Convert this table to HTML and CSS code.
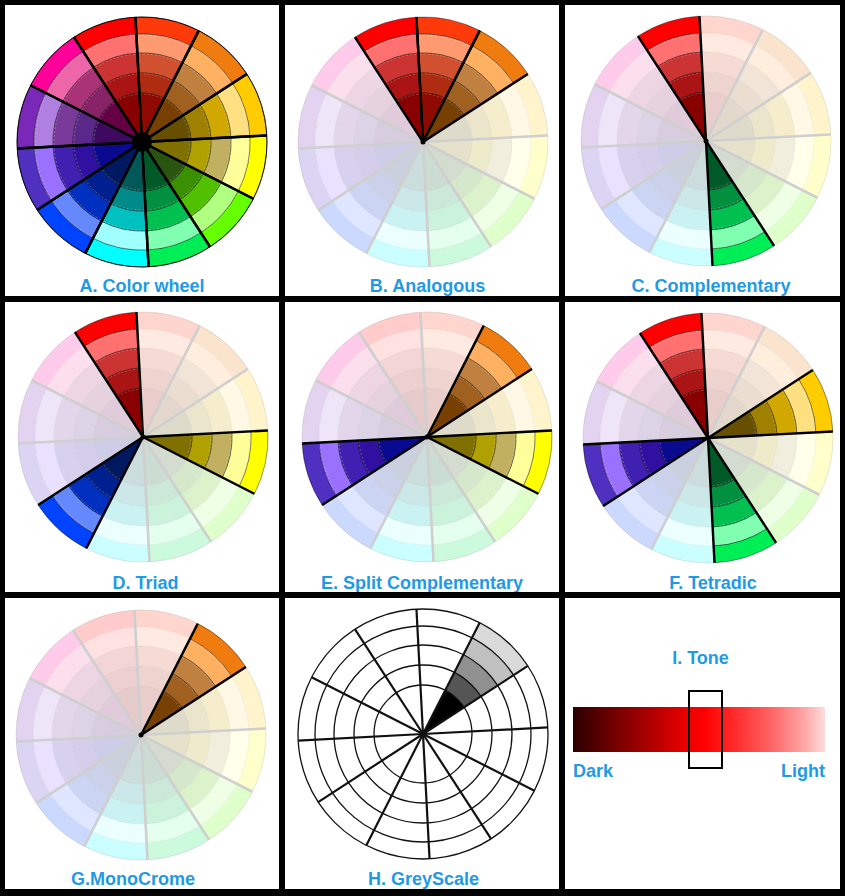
FILE: index.html
```html
<!DOCTYPE html>
<html lang="en">
<head>
<meta charset="utf-8">
<title>Color schemes</title>
<link rel="stylesheet" href="styles.css">
</head>
<body>
<div class="board">
  <div class="panel">
    <svg class="wheel" viewBox="0 0 274 271" data-mode="full" data-cx="137" data-cy="137"></svg>
    <div class="label">A. Color wheel</div>
  </div>
  <div class="panel">
    <svg class="wheel" viewBox="0 0 274 271" data-hl="0,1,2" data-cx="138" data-cy="137"></svg>
    <div class="label shift-b">B. Analogous</div>
  </div>
  <div class="panel">
    <svg class="wheel" viewBox="0 0 274 271" data-hl="0,6" data-cx="141" data-cy="136"></svg>
    <div class="label shift-c">C. Complementary</div>
  </div>
  <div class="panel">
    <svg class="wheel" viewBox="0 0 274 271" data-hl="0,4,8" data-cx="138" data-cy="135"></svg>
    <div class="label shift-d">D. Triad</div>
  </div>
  <div class="panel">
    <svg class="wheel" viewBox="0 0 274 271" data-hl="2,4,9" data-cx="142" data-cy="135"></svg>
    <div class="label">E. Split Complementary</div>
  </div>
  <div class="panel">
    <svg class="wheel" viewBox="0 0 274 271" data-hl="0,3,6,9" data-cx="143" data-cy="136"></svg>
    <div class="label shift-f">F. Tetradic</div>
  </div>
  <div class="panel">
    <svg class="wheel" viewBox="0 0 274 271" data-hl="2" data-cx="136" data-cy="137"></svg>
    <div class="label shift-g">G.MonoCrome</div>
  </div>
  <div class="panel">
    <svg class="wheel" viewBox="0 0 274 271" data-mode="grey" data-hl="2" data-cx="138" data-cy="136"></svg>
    <div class="label shift-h">H. GreyScale</div>
  </div>
  <div class="panel tone">
    <div class="label">I. Tone</div>
    <div class="tone-bar">
      <div class="tone-mark"></div>
    </div>
    <div class="tone-ends">
      <span>Dark</span>
      <span>Light</span>
    </div>
  </div>
</div>
<script src="script.js"></script>
</body>
</html>
```

FILE: styles.css
```css
html, body {
  margin: 0;
  background: #000;
}
body {
  width: 845px;
  height: 896px;
  overflow: hidden;
}
.board {
  display: grid;
  grid-template-columns: 274px 274px 275px;
  grid-template-rows: 291px 290px 291px;
  gap: 6px;
  padding: 5px;
}
.panel {
  background: #fff;
  display: flex;
  flex-direction: column;
  overflow: hidden;
}
.wheel {
  display: block;
  width: 274px;
  height: 271px;
  flex: none;
}
.label {
  font-family: "Liberation Sans", Arial, sans-serif;
  font-weight: 700;
  font-size: 18px;
  line-height: 20px;
  color: #1f9ae6;
  text-align: center;
}
.shift-b { padding-left: 11px; }
.shift-c { padding-left: 17px; }
.shift-d { padding-left: 7px; }
.shift-f { padding-left: 21px; }
.shift-g { padding-right: 18px; }
.shift-h { padding-left: 3px; }

.tone {
  padding: 50px 15px 0 8px;
}
.tone .label {
  padding-left: 3px;
}
.tone-bar {
  position: relative;
  margin-top: 39px;
  height: 45px;
  background: linear-gradient(to right, #2a0000 0%, #7a0000 18%, #b80000 33%, #e80000 44%, #ff0000 52%, #ff2a2a 64%, #ff6a6a 80%, #ffa8a8 92%, #ffdcdc 100%);
}
.tone-mark {
  position: absolute;
  left: 115px;
  top: -17px;
  width: 31px;
  height: 75px;
  border: 2px solid #000;
}
.tone-ends {
  display: flex;
  justify-content: space-between;
  margin-top: 9px;
  font-family: "Liberation Sans", Arial, sans-serif;
  font-weight: 700;
  font-size: 18px;
  line-height: 20px;
  color: #1f9ae6;
}
```

FILE: script.js
```js
(function () {
  var HUES = [
    ['#ff0000', '#ff7070', '#cc3333', '#aa1414', '#880000'],
    ['#ff3a0a', '#ff9a70', '#d05030', '#b02c10', '#8e0a00'],
    ['#f07c10', '#ffb060', '#c08040', '#a06020', '#784000'],
    ['#ffcc00', '#ffe080', '#d0a800', '#a08000', '#665000'],
    ['#ffff00', '#ffff99', '#c0b060', '#b0a000', '#807000'],
    ['#66ff00', '#b0ff80', '#50c000', '#3a9000', '#2a5510'],
    ['#00ee55', '#80ffb0', '#00c050', '#009040', '#005a28'],
    ['#00ffff', '#a0ffff', '#00c0c0', '#008a8a', '#005858'],
    ['#0044ff', '#6688ff', '#0030c0', '#002090', '#001860'],
    ['#5030c0', '#9a70ff', '#4020b0', '#3010a0', '#0a0a90'],
    ['#7a28b8', '#b080e0', '#7a3a9a', '#5a2888', '#3e0a60'],
    ['#ff0099', '#ee66aa', '#aa3377', '#882266', '#660044']
  ];
  var GREYS = ['#dadada', '#c0c0c0', '#909090', '#555555', '#000000'];
  var R = [125, 108, 89, 69, 49, 0];

  function pt(cx, cy, r, a) {
    var t = a * Math.PI / 180;
    return (cx + r * Math.sin(t)).toFixed(2) + ' ' + (cy - r * Math.cos(t)).toFixed(2);
  }
  function seg(cx, cy, r0, r1, a0, a1) {
    var d = 'M' + pt(cx, cy, r0, a0) + ' A' + r0 + ' ' + r0 + ' 0 0 1 ' + pt(cx, cy, r0, a1);
    if (r1 > 0) {
      d += ' L' + pt(cx, cy, r1, a1) + ' A' + r1 + ' ' + r1 + ' 0 0 0 ' + pt(cx, cy, r1, a0);
    } else {
      d += ' L' + cx + ' ' + cy;
    }
    return d + ' Z';
  }
  function spoke(cx, cy, a, r, color, w) {
    return '<path d="M' + cx + ' ' + cy + ' L' + pt(cx, cy, r, a) + '" stroke="' + color +
      '" stroke-width="' + w + '" stroke-linecap="butt" fill="none"/>';
  }
  function a0(i) { return -33 + 30 * i; }
  function a1(i) { return -3 + 30 * i; }

  var wheels = document.querySelectorAll('svg.wheel');
  for (var w = 0; w < wheels.length; w++) {
    var svg = wheels[w];
    var cx = +svg.getAttribute('data-cx');
    var cy = +svg.getAttribute('data-cy');
    var mode = svg.getAttribute('data-mode') || 'color';
    var hlAttr = svg.getAttribute('data-hl') || '';
    var hl = hlAttr ? hlAttr.split(',').map(Number) : [];
    var all = mode === 'full';
    var isHL = function (i) { return all || hl.indexOf(i) >= 0; };
    var out = '';
    var i, k;

    if (mode === 'grey') {
      for (var h = 0; h < hl.length; h++) {
        for (k = 0; k < 5; k++) {
          out += '<path d="' + seg(cx, cy, R[k], R[k + 1], a0(hl[h]), a1(hl[h])) + '" fill="' + GREYS[k] + '"/>';
        }
      }
      for (k = 0; k < 5; k++) {
        out += '<circle cx="' + cx + '" cy="' + cy + '" r="' + R[k] + '" fill="none" stroke="#111" stroke-width="1.3"/>';
      }
      for (i = 0; i < 12; i++) {
        out += spoke(cx, cy, a0(i), R[0], '#111', 2.2);
      }
      svg.innerHTML = out;
      continue;
    }

    // faded sectors
    out += '<g opacity="0.2">';
    for (i = 0; i < 12; i++) {
      if (isHL(i)) continue;
      for (k = 0; k < 5; k++) {
        out += '<path d="' + seg(cx, cy, R[k], R[k + 1], a0(i), a1(i)) + '" fill="' + HUES[i][k] + '"/>';
      }
    }
    out += '</g>';
    if (!all) {
      for (k = 1; k < 5; k++) {
        out += '<circle cx="' + cx + '" cy="' + cy + '" r="' + R[k] + '" fill="none" stroke="#000" stroke-opacity="0.06" stroke-width="0.8"/>';
      }
      out += '<circle cx="' + cx + '" cy="' + cy + '" r="' + R[0] + '" fill="none" stroke="#000" stroke-opacity="0.12" stroke-width="0.8"/>';
      for (i = 0; i < 12; i++) {
        out += spoke(cx, cy, a0(i), R[0], '#cfcfcf', 2.6);
      }
    }
    // highlighted sectors
    for (i = 0; i < 12; i++) {
      if (!isHL(i)) continue;
      for (k = 0; k < 5; k++) {
        out += '<path d="' + seg(cx, cy, R[k], R[k + 1], a0(i), a1(i)) + '" fill="' + HUES[i][k] +
          '" stroke="#000" stroke-opacity="0.55" stroke-width="0.7"/>';
      }
      for (k = 1; k < 5; k++) {
        out += '<path d="M' + pt(cx, cy, R[k] - 1, a0(i) + 1) + ' A' + (R[k] - 1) + ' ' + (R[k] - 1) + ' 0 0 1 ' + pt(cx, cy, R[k] - 1, a1(i) - 1) +
          '" fill="none" stroke="#fff" stroke-opacity="0.45" stroke-width="0.6" stroke-dasharray="2 2"/>';
      }
    }
    // black edges
    for (i = 0; i < 12; i++) {
      if (!isHL(i)) continue;
      out += spoke(cx, cy, a0(i), R[0], '#000', 2.4);
      out += spoke(cx, cy, a1(i), R[0], '#000', 2.4);
    }
    if (all) {
      out += '<circle cx="' + cx + '" cy="' + cy + '" r="' + R[0] + '" fill="none" stroke="#000" stroke-width="0.9"/>';
      out += '<circle cx="' + cx + '" cy="' + cy + '" r="10" fill="#000"/>';
    } else {
      out += '<circle cx="' + cx + '" cy="' + cy + '" r="2.5" fill="#000"/>';
    }
    svg.innerHTML = out;
  }
})();
```
